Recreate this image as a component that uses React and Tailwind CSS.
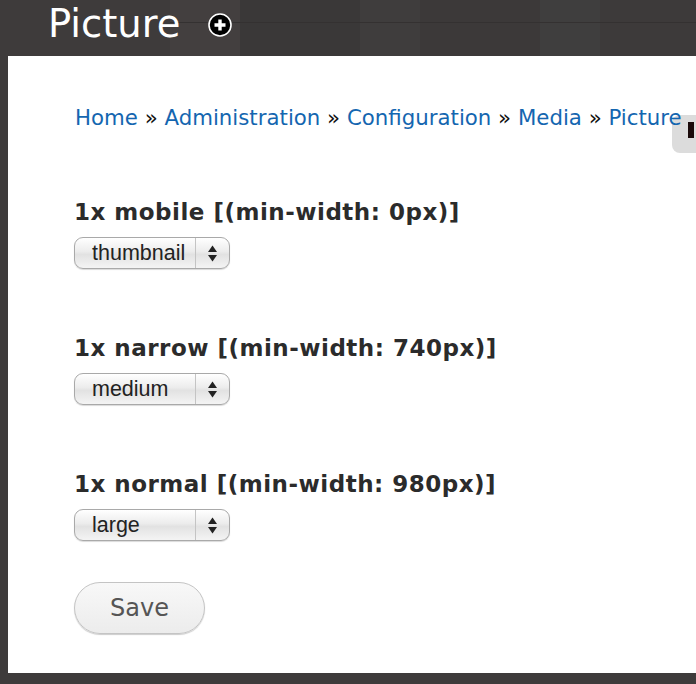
function Select({ value }) {
  return (
    <div className="flex h-[32px] w-[156px] items-stretch rounded-[9px] border border-[#a9a9a9] bg-[linear-gradient(#ffffff,#ececec_45%,#e2e2e2_55%,#f4f4f4)] shadow-[0_1px_1px_rgba(0,0,0,0.15)]">
      <div className="flex flex-1 items-center pl-[17px] font-['Liberation_Sans',Arial,sans-serif] text-[21.5px] text-[#222]">
        {value}
      </div>
      <div className="flex w-[34px] items-center justify-center border-l border-[#c4c4c4]">
        <svg width="11" height="19" viewBox="0 0 11 19">
          <path d="M5.5 1.5 L10 8 H1 Z" fill="#222" />
          <path d="M5.5 17.5 L10 11 H1 Z" fill="#222" />
        </svg>
      </div>
    </div>
  )
}

function Field({ label, value }) {
  return (
    <div className="flex flex-col gap-[11px]">
      <div className="text-[23px] font-bold leading-[28px] tracking-[0.5px] whitespace-nowrap text-[#2b2b2b]">{label}</div>
      <Select value={value} />
    </div>
  )
}

const crumbs = ['Home', 'Administration', 'Configuration', 'Media', 'Picture']

export default function App() {
  return (
    <div className="flex h-[684px] w-[696px] flex-col overflow-hidden bg-[#3e3b3b] font-['DejaVu_Sans','Lucida_Grande',sans-serif]">
      <div className="relative flex h-[56px] items-center gap-[28px] bg-[linear-gradient(90deg,#3e3b3b_0_170px,#433f3f_170px_240px,#3a3838_240px_360px,#3f3d3d_360px_420px,#3c3939_420px_540px,#3f3e3e_540px_600px,#3d3a3a_600px)] pl-[48px]">
        <div className="absolute top-[22px] right-0 left-[170px] h-px bg-[#343131]" />
        <div className="relative mt-[-8px] text-[38.5px] leading-none text-white">Picture</div>
        <svg width="24" height="24" viewBox="0 0 24 24" className="relative mt-[-6px]">
          <circle cx="12" cy="12" r="11" fill="#000" stroke="#fff" strokeWidth="1.6" />
          <path d="M12 6.5 V17.5 M6.5 12 H17.5" stroke="#fff" strokeWidth="3.4" />
        </svg>
      </div>
      <div className="ml-[8px] flex h-[617px] flex-col bg-white">
        <div className="relative mt-[48px] pl-[67px] text-[21.3px] leading-[28px] whitespace-nowrap text-[#111]">
          <div className="absolute top-[11px] left-[664px] h-[38px] w-[40px] rounded-[8px] bg-[#dcdcdc] pt-[7px] pl-[16px]">
            <div className="h-[16px] w-[6px] bg-[#1a0a0a]" />
          </div>
          <span className="relative">
            {crumbs.map((c, i) => (
              <span key={c}>
                {i > 0 && <span> » </span>}
                <span className="text-[#1466b0]">{c}</span>
              </span>
            ))}
          </span>
        </div>
        <div className="mt-[66px] flex flex-col gap-[65px] pl-[66px]">
          <Field label="1x mobile [(min-width: 0px)]" value="thumbnail" />
          <Field label="1x narrow [(min-width: 740px)]" value="medium" />
          <Field label="1x normal [(min-width: 980px)]" value="large" />
        </div>
        <div className="mt-[41px] pl-[66px]">
          <button
            type="button"
            className="h-[52px] w-[131px] rounded-full border border-[#c4c4c4] bg-[linear-gradient(#f8f8f8,#ececec)] text-[24px] text-[#555] shadow-[0_1px_1px_rgba(0,0,0,0.2)]"
          >
            Save
          </button>
        </div>
      </div>
    </div>
  )
}
